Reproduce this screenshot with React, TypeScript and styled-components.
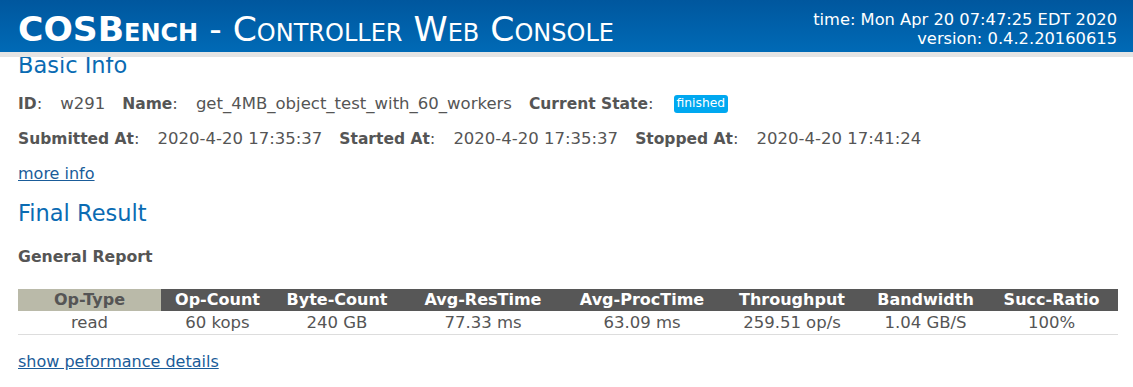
import React from 'react';
import styled, { createGlobalStyle } from 'styled-components';

const GlobalStyle = createGlobalStyle`
  body {
    margin: 0;
    background: #fff;
    font-family: "DejaVu Sans", Verdana, sans-serif;
    color: #555;
  }
`;

const Header = styled.div`
  height: 52px;
  background: linear-gradient(to bottom, #00579e, #006ab6);
  border-bottom: 5px solid #e4e4e4;
  display: flex;
  align-items: center;
  justify-content: space-between;
  padding: 0 16px 0 18px;
  color: #fff;
  position: relative;
  z-index: 1;
`;

const Title = styled.div`
  font-variant: small-caps;
  font-size: 34.6px;
  padding-top: 5px;
  white-space: nowrap;
`;

const Brand = styled.span`
  font-weight: bold;
`;

const ServerInfo = styled.div`
  text-align: right;
  font-size: 16.3px;
  line-height: 19px;
  padding-top: 6px;
`;

const Content = styled.div`
  padding: 0 18px;
  margin-top: -6px;
`;

const SectionTitle = styled.h2<{ gap?: number }>`
  margin: ${p => p.gap ?? 0}px 0 0;
  font-weight: normal;
  font-size: 22.5px;
  line-height: 28px;
  color: #0a6bb3;
`;

const InfoList = styled.div`
  margin-top: 7px;
`;

const InfoRow = styled.div`
  display: flex;
  align-items: center;
  height: 35px;
  white-space: nowrap;
  font-size: 16.5px;
`;

const Label = styled.b`
  color: #555;
  font-size: 15.5px;
`;

const Value = styled.span`
  margin: 0 17px 0 18px;
  color: #555;
`;

const Badge = styled.span`
  background: #00a8f0;
  color: #fff;
  font-size: 12.3px;
  line-height: 15px;
  padding: 1px 3px 2px;
  border-radius: 3px;
  margin-left: 20px;
`;

const Link = styled.a<{ gap?: number }>`
  color: #1a5c99;
  font-size: 16px;
  text-decoration: underline;
  display: block;
  height: 36px;
  line-height: 36px;
  margin-top: ${p => p.gap ?? 0}px;
`;

const SubTitle = styled.h3`
  margin: 4px 0 0;
  font-size: 15.7px;
  font-weight: bold;
  color: #555;
  height: 52px;
  line-height: 52px;
`;

const Table = styled.table`
  width: 1100px;
  border-collapse: collapse;
  margin-top: 6px;
`;

const Th = styled.th<{ first?: boolean }>`
  background: ${p => (p.first ? '#babaa9' : '#575757')};
  color: ${p => (p.first ? '#555' : '#fff')};
  height: 22px;
  padding: 0;
  font-size: 16px;
  line-height: 22px;
  font-weight: bold;
`;

const Td = styled.td`
  text-align: center;
  height: 23px;
  padding: 0;
  font-size: 16.5px;
  line-height: 23px;
  border-bottom: 1px solid #ddd;
  color: #555;
`;

const columns = [
  { name: 'Op-Type', width: 143 },
  { name: 'Op-Count', width: 113 },
  { name: 'Byte-Count', width: 126 },
  { name: 'Avg-ResTime', width: 166 },
  { name: 'Avg-ProcTime', width: 152 },
  { name: 'Throughput', width: 148 },
  { name: 'Bandwidth', width: 119 },
  { name: 'Succ-Ratio', width: 133 },
];

const row = ['read', '60 kops', '240 GB', '77.33 ms', '63.09 ms', '259.51 op/s', '1.04 GB/S', '100%'];

export default function App() {
  return (
    <>
      <GlobalStyle />
      <Header>
        <Title>
          <Brand>COSBench</Brand> - Controller Web Console
        </Title>
        <ServerInfo>
          <div>time: Mon Apr 20 07:47:25 EDT 2020</div>
          <div>version: 0.4.2.20160615</div>
        </ServerInfo>
      </Header>
      <Content>
        <SectionTitle>Basic Info</SectionTitle>
        <InfoList>
          <InfoRow>
            <Label>ID</Label>:<Value>w291</Value>
            <Label>Name</Label>:<Value>get_4MB_object_test_with_60_workers</Value>
            <Label>Current State</Label>:<Badge>finished</Badge>
          </InfoRow>
          <InfoRow>
            <Label>Submitted At</Label>:<Value>2020-4-20 17:35:37</Value>
            <Label>Started At</Label>:<Value>2020-4-20 17:35:37</Value>
            <Label>Stopped At</Label>:<Value>2020-4-20 17:41:24</Value>
          </InfoRow>
        </InfoList>
        <Link href="#">more info</Link>
        <SectionTitle gap={7}>Final Result</SectionTitle>
        <SubTitle>General Report</SubTitle>
        <Table>
          <thead>
            <tr>
              {columns.map((c, i) => (
                <Th key={c.name} first={i === 0} style={{ width: c.width }}>
                  {c.name}
                </Th>
              ))}
            </tr>
          </thead>
          <tbody>
            <tr>
              {row.map((v, i) => (
                <Td key={i}>{v}</Td>
              ))}
            </tr>
          </tbody>
        </Table>
        <Link href="#" gap={9}>show peformance details</Link>
      </Content>
    </>
  );
}
